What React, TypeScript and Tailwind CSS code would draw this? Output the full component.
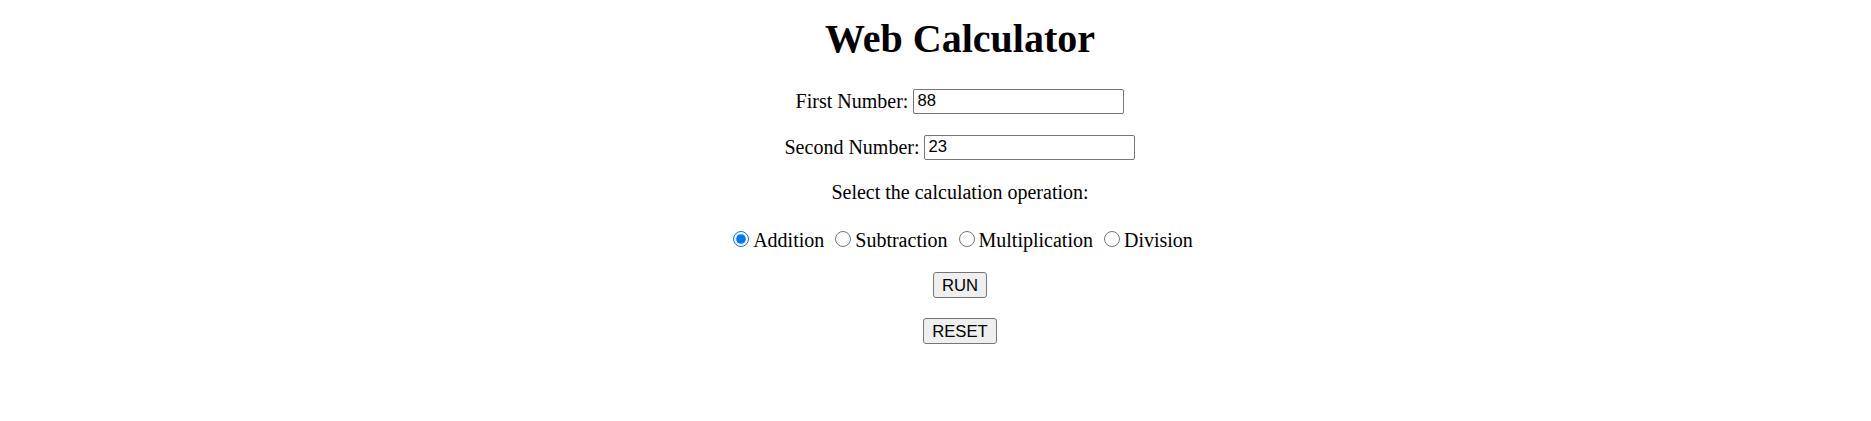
import React from "react";

const serif = { fontFamily: '"Liberation Serif", "Times New Roman", serif' };

export default function App() {
  return (
    <div className="w-full overflow-hidden bg-white text-black">
      <div
        className="w-[1920px] text-center text-[20px] leading-[23px] font-['Liberation_Serif','Times_New_Roman',serif]"
        style={serif}
      >
        <h1 className="mt-[16px] mb-[26px] text-[40px] leading-[46px] font-bold">Web Calculator</h1>

        <div className="flex h-[26px] items-center justify-center">
          <label className="mr-[5px]">First Number:</label>
          <input
            type="text"
            defaultValue="88"
            className="h-[25px] w-[211px] rounded-[2px] border border-[#767676] bg-white px-[3px] text-[16.67px] text-black font-['Liberation_Sans',Arial,sans-serif] outline-none"
          />
        </div>

        <div className="mt-[20px] flex h-[26px] items-center justify-center">
          <label className="mr-[5px]">Second Number:</label>
          <input
            type="text"
            defaultValue="23"
            className="h-[25px] w-[211px] rounded-[2px] border border-[#767676] bg-white px-[3px] text-[16.67px] text-black font-['Liberation_Sans',Arial,sans-serif] outline-none"
          />
        </div>

        <div className="mt-[20px] h-[24px] pt-[1px]">Select the calculation operation:</div>

        <div className="mt-[20px] h-[28px] pt-[5px] whitespace-nowrap">
          <input type="radio" name="op" defaultChecked className="ml-[6px] mr-[4px] h-[16px] w-[16px] align-baseline" />
          <span>Addition</span>{" "}
          <input type="radio" name="op" className="ml-[6px] mr-[4px] h-[16px] w-[16px] align-baseline" />
          <span>Subtraction</span>{" "}
          <input type="radio" name="op" className="ml-[6px] mr-[4px] h-[16px] w-[16px] align-baseline" />
          <span>Multiplication</span>{" "}
          <input type="radio" name="op" className="ml-[6px] mr-[4px] h-[16px] w-[16px] align-baseline" />
          <span>Division</span>
        </div>

        <div className="mt-[20px] flex h-[26px] justify-center">
          <button className="h-[26px] rounded-[3px] border border-[#767676] bg-[#efefef] px-[8px] text-[16.67px] leading-[19px] text-black font-['Liberation_Sans',Arial,sans-serif]">
            RUN
          </button>
        </div>

        <div className="mt-[20px] flex h-[26px] justify-center">
          <button className="h-[26px] rounded-[3px] border border-[#767676] bg-[#efefef] px-[8px] text-[16.67px] leading-[19px] text-black font-['Liberation_Sans',Arial,sans-serif]">
            RESET
          </button>
        </div>
        <div className="h-[77px]" />
      </div>
    </div>
  );
}
